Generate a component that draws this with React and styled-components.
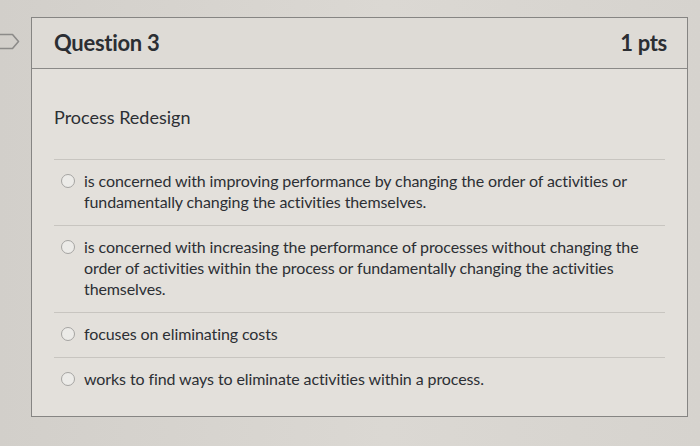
import React from "react";
import styled, { createGlobalStyle } from "styled-components";

const GlobalStyle = createGlobalStyle`
  html, body {
    margin: 0;
    padding: 0;
  }
  body {
    width: 700px;
    height: 446px;
    overflow: hidden;
    background: linear-gradient(90deg, #d2cfca 0%, #dbd8d3 55%, #d6d3ce 100%);
    font-family: Lato, "Open Sans", sans-serif;
    color: #2c2f34;
  }
`;

const Page = styled.div`
  display: flex;
  padding-top: 17px;
`;

const Gutter = styled.div`
  width: 31px;
  flex-shrink: 0;
  padding-top: 16px;
`;

const Card = styled.div`
  width: 657px;
  height: 400px;
  box-sizing: border-box;
  border: 1px solid #868583;
  background: #e3e0db;
`;

const Header = styled.div`
  height: 51px;
  box-sizing: border-box;
  display: flex;
  align-items: center;
  justify-content: space-between;
  padding: 0 20px 2px 22px;
  background: #dedbd6;
  border-bottom: 1px solid #8a8987;
`;

const Title = styled.h2`
  margin: 0;
  font-size: 22px;
  font-weight: 700;
  color: #2b2e33;
  letter-spacing: -0.3px;
`;

const Body = styled.div`
  padding: 35px 22px 0 22px;
`;

const Prompt = styled.p`
  margin: 0 0 29px;
  font-size: 18px;
  line-height: 26px;
`;

const Answer = styled.label`
  display: flex;
  gap: 9px;
  padding: 10px 10px 13px 7px;
  border-top: 1px solid #c8c5c0;
`;

const Radio = styled.span`
  width: 14px;
  height: 14px;
  margin-top: 3.5px;
  flex-shrink: 0;
  box-sizing: border-box;
  border-radius: 50%;
  border: 1px solid #a5a4a2;
  background: #ecebe8;
`;

const AnswerText = styled.span`
  font-size: 16px;
  line-height: 21px;
  max-width: 575px;
  letter-spacing: -0.1px;
`;

const answers = [
  "is concerned with improving performance by changing the order of activities or fundamentally changing the activities themselves.",
  "is concerned with increasing the performance of processes without changing the order of activities within the process or fundamentally changing the activities themselves.",
  "focuses on eliminating costs",
  "works to find ways to eliminate activities within a process.",
];

function FlagIcon() {
  return (
    <svg width="20" height="18" viewBox="0 0 20 18">
      <path
        d="M-1 1.5 H12.5 L18.5 8.5 L12.5 15.5 H-1"
        fill="none"
        stroke="#8c8b89"
        strokeWidth="1.6"
        strokeLinejoin="round"
      />
    </svg>
  );
}

export default function App() {
  return (
    <>
      <GlobalStyle />
      <Page>
        <Gutter>
          <FlagIcon />
        </Gutter>
        <Card>
          <Header>
            <Title>Question 3</Title>
            <Title>1 pts</Title>
          </Header>
          <Body>
            <Prompt>Process Redesign</Prompt>
            {answers.map((a) => (
              <Answer key={a}>
                <Radio />
                <AnswerText>{a}</AnswerText>
              </Answer>
            ))}
          </Body>
        </Card>
      </Page>
    </>
  );
}
